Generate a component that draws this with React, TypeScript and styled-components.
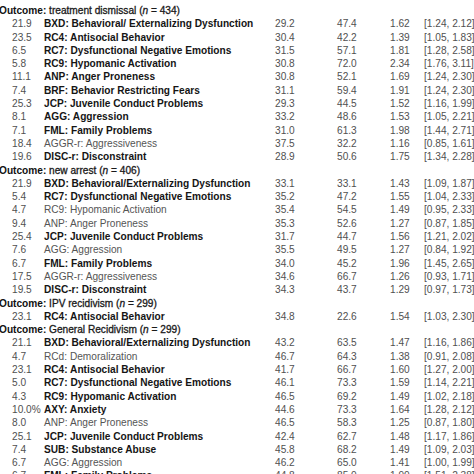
import React from "react";
import styled, { createGlobalStyle } from "styled-components";

const Global = createGlobalStyle`
  html, body { margin: 0; padding: 0; background: #ffffff; overflow: hidden; }
  body { font-family: "Liberation Sans", Arial, Helvetica, sans-serif; }
`;

const Table = styled.div`
  display: grid;
  grid-template-columns: 32px 231px 62px 53px 34px 80px;
  padding: 4px 0 0 12px;
  width: 474px;
  box-sizing: border-box;
  font-size: 10.15px;
  line-height: 13.29px;
  color: #505050;
  white-space: nowrap;
`;

const OutcomeRow = styled.div`
  grid-column: 1 / -1;
  margin-left: -13px;
  color: #1a1a1a;
  -webkit-text-stroke: 0.3px #1a1a1a;
`;

const OutcomeKey = styled.span`
  font-weight: bold;
  color: #111;
  -webkit-text-stroke: 0;
`;

const Cell = styled.div`
  overflow: visible;
`;

const Label = styled.div<{ $sig: boolean }>`
  font-weight: ${(p) => (p.$sig ? "bold" : "normal")};
  color: ${(p) => (p.$sig ? "#151515" : "#555555")};
`;

type Row = [string, string, string, string, string, string, boolean];

type Group = { title: string; n: string; rows: Row[] };

const groups: Group[] = [
  {
    title: "treatment dismissal",
    n: "434",
    rows: [
      ["21.9", "BXD: Behavioral/ Externalizing Dysfunction", "29.2", "47.4", "1.62", "[1.24, 2.12]", true],
      ["23.5", "RC4: Antisocial Behavior", "30.4", "42.2", "1.39", "[1.05, 1.83]", true],
      ["6.5", "RC7: Dysfunctional Negative Emotions", "31.5", "57.1", "1.81", "[1.28, 2.58]", true],
      ["5.8", "RC9: Hypomanic Activation", "30.8", "72.0", "2.34", "[1.76, 3.11]", true],
      ["11.1", "ANP: Anger Proneness", "30.8", "52.1", "1.69", "[1.24, 2.30]", true],
      ["7.4", "BRF: Behavior Restricting Fears", "31.1", "59.4", "1.91", "[1.24, 2.30]", true],
      ["25.3", "JCP: Juvenile Conduct Problems", "29.3", "44.5", "1.52", "[1.16, 1.99]", true],
      ["8.1", "AGG: Aggression", "33.2", "48.6", "1.53", "[1.05, 2.21]", true],
      ["7.1", "FML: Family Problems", "31.0", "61.3", "1.98", "[1.44, 2.71]", true],
      ["18.4", "AGGR-r: Aggressiveness", "37.5", "32.2", "1.16", "[0.85, 1.61]", false],
      ["19.6", "DISC-r: Disconstraint", "28.9", "50.6", "1.75", "[1.34, 2.28]", true],
    ],
  },
  {
    title: "new arrest",
    n: "406",
    rows: [
      ["21.9", "BXD: Behavioral/Externalizing Dysfunction", "33.1", "33.1", "1.43", "[1.09, 1.87]", true],
      ["5.4", "RC7: Dysfunctional Negative Emotions", "35.2", "47.2", "1.55", "[1.04, 2.33]", true],
      ["4.7", "RC9: Hypomanic Activation", "35.4", "54.5", "1.49", "[0.95, 2.33]", false],
      ["9.4", "ANP: Anger Proneness", "35.3", "52.6", "1.27", "[0.87, 1.85]", false],
      ["25.4", "JCP: Juvenile Conduct Problems", "31.7", "44.7", "1.56", "[1.21, 2.02]", true],
      ["7.6", "AGG: Aggression", "35.5", "49.5", "1.27", "[0.84, 1.92]", false],
      ["6.7", "FML: Family Problems", "34.0", "45.2", "1.96", "[1.45, 2.65]", true],
      ["17.5", "AGGR-r: Aggressiveness", "34.6", "66.7", "1.26", "[0.93, 1.71]", false],
      ["19.5", "DISC-r: Disconstraint", "34.3", "43.7", "1.29", "[0.97, 1.73]", true],
    ],
  },
  {
    title: "IPV recidivism",
    n: "299",
    rows: [["23.1", "RC4: Antisocial Behavior", "34.8", "22.6", "1.54", "[1.03, 2.30]", true]],
  },
  {
    title: "General Recidivism",
    n: "299",
    rows: [
      ["21.1", "BXD: Behavioral/Externalizing Dysfunction", "43.2", "63.5", "1.47", "[1.16, 1.86]", true],
      ["4.7", "RCd: Demoralization", "46.7", "64.3", "1.38", "[0.91, 2.08]", false],
      ["23.1", "RC4: Antisocial Behavior", "41.7", "66.7", "1.60", "[1.27, 2.00]", true],
      ["5.0", "RC7: Dysfunctional Negative Emotions", "46.1", "73.3", "1.59", "[1.14, 2.21]", true],
      ["4.3", "RC9: Hypomanic Activation", "46.5", "69.2", "1.49", "[1.02, 2.18]", true],
      ["10.0%", "AXY: Anxiety", "44.6", "73.3", "1.64", "[1.28, 2.12]", true],
      ["8.0", "ANP: Anger Proneness", "46.5", "58.3", "1.25", "[0.87, 1.80]", false],
      ["25.1", "JCP: Juvenile Conduct Problems", "42.4", "62.7", "1.48", "[1.17, 1.86]", true],
      ["7.4", "SUB: Substance Abuse", "45.8", "68.2", "1.49", "[1.09, 2.03]", true],
      ["6.7", "AGG: Aggression", "46.2", "65.0", "1.41", "[1.00, 1.99]", false],
      ["6.7", "FML: Family Problems", "44.8", "85.0", "1.90", "[1.51, 2.38]", true],
    ],
  },
];

export default function App() {
  return (
    <>
      <Global />
      <Table>
        {groups.map((g) => (
          <React.Fragment key={g.title}>
            <OutcomeRow>
              <OutcomeKey>Outcome:</OutcomeKey> {g.title} (<i>n</i> = {g.n})
            </OutcomeRow>
            {g.rows.map((r, i) => (
              <React.Fragment key={i}>
                <Cell>{r[0]}</Cell>
                <Label $sig={r[6]}>{r[1]}</Label>
                <Cell>{r[2]}</Cell>
                <Cell>{r[3]}</Cell>
                <Cell>{r[4]}</Cell>
                <Cell>{r[5]}</Cell>
              </React.Fragment>
            ))}
          </React.Fragment>
        ))}
      </Table>
    </>
  );
}
